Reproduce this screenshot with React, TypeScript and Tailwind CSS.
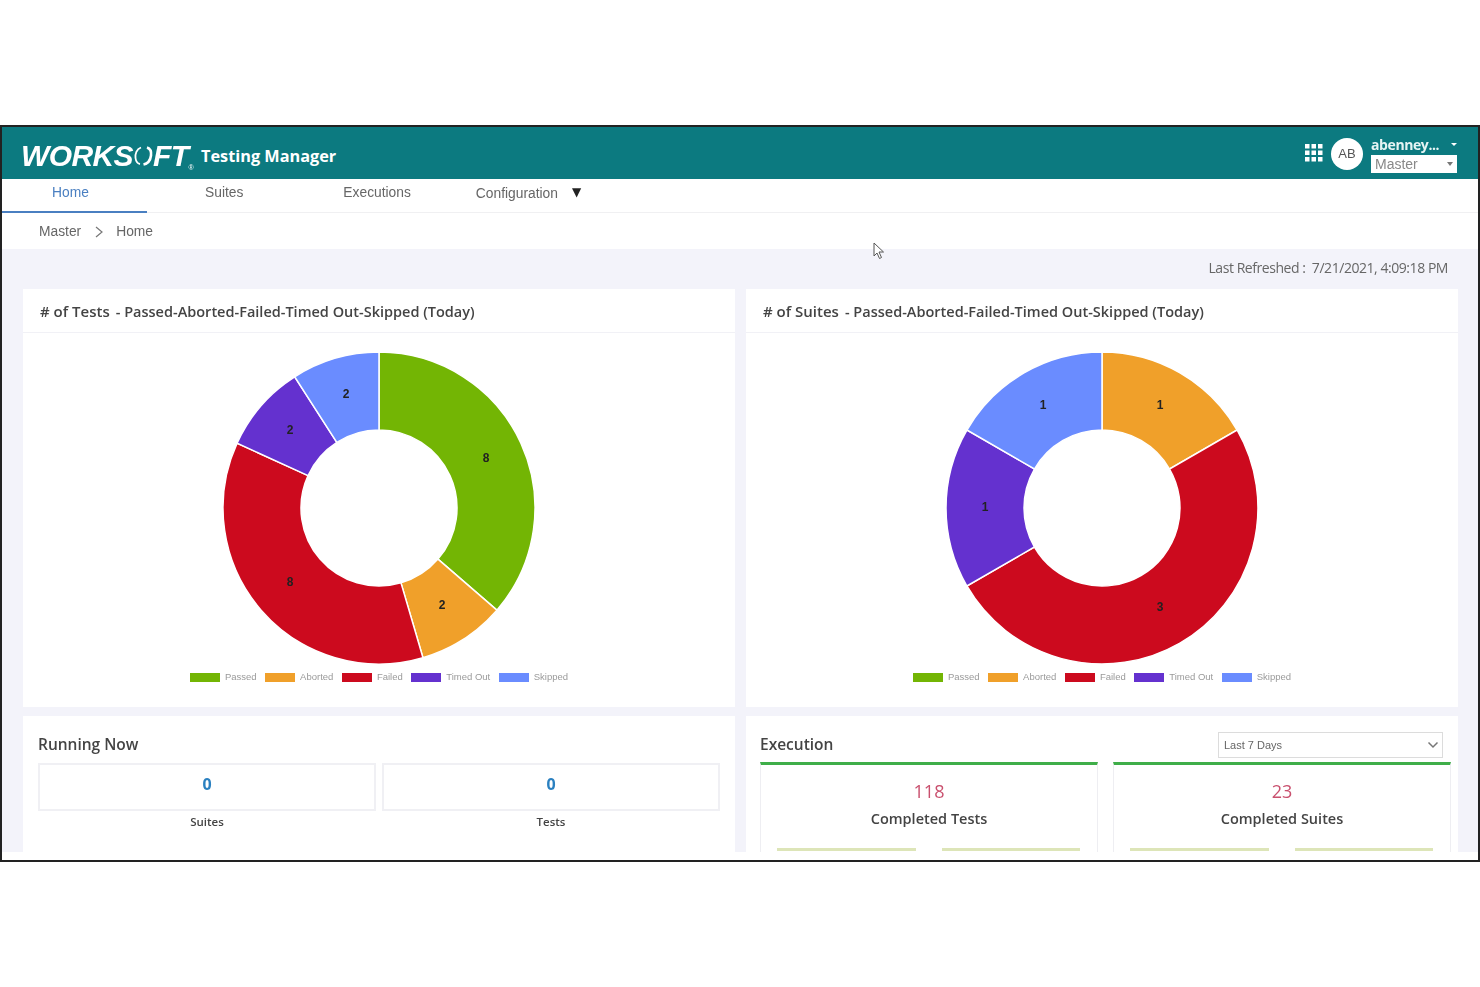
import React from "react";

const C = { p: "#73b504", a: "#f0a02a", f: "#cc0a1e", t: "#6431cf", s: "#6a8cff" };

function pt(cx: number, cy: number, r: number, deg: number) {
  const a = (deg * Math.PI) / 180;
  return [cx + r * Math.sin(a), cy - r * Math.cos(a)];
}

function slicePath(start: number, end: number) {
  const R = 156, r = 78, c = 160;
  const [x1, y1] = pt(c, c, R, start);
  const [x2, y2] = pt(c, c, R, end);
  const [x3, y3] = pt(c, c, r, end);
  const [x4, y4] = pt(c, c, r, start);
  const large = end - start > 180 ? 1 : 0;
  return `M${x1} ${y1}A${R} ${R} 0 ${large} 1 ${x2} ${y2}L${x3} ${y3}A${r} ${r} 0 ${large} 0 ${x4} ${y4}Z`;
}

type Seg = { v: number; c: string; lx: number; ly: number };

function Donut({ segs }: { segs: Seg[] }) {
  const total = segs.reduce((s, x) => s + x.v, 0);
  let cur = 0;
  return (
    <svg width="320" height="320" viewBox="0 0 320 320" className="block">
      {segs.map((s, i) => {
        const st = cur;
        cur += (s.v / total) * 360;
        return <path key={i} d={slicePath(st, cur)} fill={s.c} stroke="#ffffff" strokeWidth="1.5" />;
      })}
      {segs.map((s, i) => (
        <text key={i} x={s.lx} y={s.ly} textAnchor="middle" dominantBaseline="middle" fontSize="12" fontWeight="700" fontFamily="Liberation Sans, sans-serif" fill="#222">
          {s.v}
        </text>
      ))}
    </svg>
  );
}

function Legend() {
  const items = [
    ["Passed", C.p],
    ["Aborted", C.a],
    ["Failed", C.f],
    ["Timed Out", C.t],
    ["Skipped", C.s],
  ];
  return (
    <div className="flex justify-center gap-[8.5px] h-[16px] items-center">
      {items.map(([n, c]) => (
        <div key={n} className="flex items-center gap-[5px]">
          <span className="block w-[30px] h-[9px]" style={{ background: c }} />
          <span className="text-[9.5px] leading-none text-[#9a9a9a] font-['Liberation_Sans']">{n}</span>
        </div>
      ))}
    </div>
  );
}

function ChartCard({ name, segs }: { name: string; segs: Seg[] }) {
  return (
    <div className="bg-white h-[418px] flex flex-col">
      <div className="h-[44px] shrink-0 border-b border-[#f1f1f6] pl-[17px] pt-[2px] flex items-center text-[#444] font-['Open_Sans'] font-semibold whitespace-nowrap">
        <span className="text-[15px]">{name}</span>
        <span className="text-[14.5px] ml-[6px]">- Passed-Aborted-Failed-Timed Out-Skipped (Today)</span>
      </div>
      <div className="flex justify-center pt-[15px] h-[336px]">
        <Donut segs={segs} />
      </div>
      <Legend />
    </div>
  );
}

function RunTile({ n, label }: { n: string; label: string }) {
  return (
    <div className="flex flex-col items-center">
      <div className="w-full h-[48px] border-2 border-[#f0f0f4] flex items-center justify-center pb-[6px] text-[#2a80c0] text-[16px] font-bold font-['Open_Sans']">
        {n}
      </div>
      <div className="mt-[2px] text-[11.5px] font-semibold text-[#444] font-['Open_Sans']">{label}</div>
    </div>
  );
}

function ExecTile({ n, label }: { n: string; label: string }) {
  return (
    <div className="border-t-[3px] border-t-[#3fae49] border-x border-x-[#eeeef2] h-[100px] flex flex-col items-center relative">
      <div className="mt-[14px] text-[18px] leading-[24px] text-[#c9506e] font-['Open_Sans']">{n}</div>
      <div className="mt-[5px] text-[14.5px] leading-[22px] font-semibold text-[#444] font-['Open_Sans']">{label}</div>
      <div className="absolute left-[16px] right-[17px] bottom-[11px] h-[3px] flex gap-[26px]">
        <div className="flex-1 bg-[#dde5b8]" />
        <div className="flex-1 bg-[#dde5b8]" />
      </div>
    </div>
  );
}

function Logo() {
  return (
    <div className="flex items-center text-white font-['Liberation_Sans'] font-bold italic text-[30px] leading-none tracking-[-0.6px] w-[180px] relative">
      <span>WORKS</span>
      <svg width="22" height="24" viewBox="0 0 22 24" className="-mx-[1px]">
        <path d="M9 3.5C4.5 5 3 10 3.5 14c.4 3 2 5.5 4.5 6" fill="none" stroke="#fff" strokeWidth="1.8" />
        <path d="M15 3.5c3 1 4.5 4 4 8-.5 4-3 8-7.5 9" fill="none" stroke="#fff" strokeWidth="2.6" />
      </svg>
      <span>FT</span>
      <span className="text-[7px] not-italic font-normal self-end">®</span>
    </div>
  );
}

function Nav() {
  const cls = "text-[13.8px] text-[#666] font-['Liberation_Sans']";
  return (
    <div className="h-[34px] shrink-0 border-b border-[#f0f0f2] flex items-stretch relative">
      <div className="w-[145px] h-[34px] border-b-2 border-[#4a7fc1] flex justify-center pt-[4px] text-[13.8px] text-[#4a7fc1] font-['Liberation_Sans'] pr-[8px]">
        Home
      </div>
      <div className={`${cls} ml-[58px] pt-[4px]`}>Suites</div>
      <div className={`${cls} ml-[100px] pt-[4px]`}>Executions</div>
      <div className={`${cls} ml-[65px] pt-[5px]`}>Configuration</div>
      <div className="ml-[14px] pt-[4px] text-[#222] text-[12px] font-['DejaVu_Sans']">▼</div>
    </div>
  );
}

export default function App() {
  const left: Seg[] = [
    { v: 8, c: C.p, lx: 267, ly: 111 },
    { v: 2, c: C.a, lx: 223, ly: 258 },
    { v: 8, c: C.f, lx: 71, ly: 235 },
    { v: 2, c: C.t, lx: 71, ly: 83 },
    { v: 2, c: C.s, lx: 127, ly: 47 },
  ];
  const right: Seg[] = [
    { v: 1, c: C.a, lx: 218, ly: 58 },
    { v: 3, c: C.f, lx: 218, ly: 260 },
    { v: 1, c: C.t, lx: 43, ly: 160 },
    { v: 1, c: C.s, lx: 101, ly: 58 },
  ];
  return (
    <div className="w-[1480px] h-[987px] bg-white pt-[125px] relative overflow-hidden">
      <div className="h-[737px] border-2 border-[#222] flex flex-col blur-[0.7px]">
        <header className="h-[52px] shrink-0 bg-[#0c7a80] flex items-center pl-[19px] pr-[21px]">
          <div className="flex items-center pt-[6px]">
            <Logo />
            <div className="text-white font-bold text-[16.3px] font-['Open_Sans']">Testing Manager</div>
          </div>
          <div className="ml-auto flex items-center">
            <svg width="18" height="18" viewBox="0 0 18 18" fill="#fff" className="mr-[8px]">
              {[0, 6.5, 13].flatMap((y) =>
                [0, 6.5, 13].map((x) => <rect key={`${x}-${y}`} x={x} y={y} width="4.5" height="4.5" />)
              )}
            </svg>
            <div className="w-[32px] h-[32px] rounded-full bg-white flex items-center justify-center text-[13px] text-[#555] font-['Liberation_Sans'] mt-[2px]">
              AB
            </div>
            <div className="ml-[8px] w-[86px] flex flex-col">
              <div className="flex items-center justify-between h-[18px] text-[#e6f4f4] text-[14px] font-bold font-['Open_Sans'] tracking-[-0.4px]">
                <span>abenney...</span>
                <span className="w-0 h-0 border-x-[3px] border-x-transparent border-t-[3px] border-t-white" />
              </div>
              <div className="h-[18px] mt-[2px] -mb-[2px] bg-white flex items-center justify-between px-[4px] text-[14px] text-[#888] font-['Liberation_Sans']">
                <span>Master</span>
                <span className="w-0 h-0 border-x-[3px] border-x-transparent border-t-[4px] border-t-[#777]" />
              </div>
            </div>
          </div>
        </header>
        <Nav />
        <div className="h-[36px] shrink-0 flex items-center pl-[37px] pt-[2px] text-[13.8px] text-[#666] font-['Liberation_Sans']">
          <span>Master</span>
          <svg width="8" height="12" viewBox="0 0 8 12" className="ml-[14px] mr-[13px]">
            <path d="M1 1l6 5-6 5" fill="none" stroke="#777" strokeWidth="1.2" />
          </svg>
          <span>Home</span>
        </div>
        <main className="flex-1 min-h-0 bg-[#f3f3fa] overflow-hidden pl-[21px] pr-[20px]">
          <div className="h-[40px] flex items-center justify-end pr-[10px] pb-[4px] text-[14px] text-[#666] font-['Open_Sans'] tracking-[-0.45px]">
            Last Refreshed :&nbsp; 7/21/2021, 4:09:18 PM
          </div>
          <div className="grid grid-cols-2 gap-x-[11px] gap-y-[9px]">
            <ChartCard name="# of Tests" segs={left} />
            <ChartCard name="# of Suites" segs={right} />
            <div className="bg-white h-[140px] px-[15px]">
              <div className="h-[47px] pt-[15px] text-[15.5px] leading-[26px] font-semibold text-[#444] font-['Open_Sans']">Running Now</div>
              <div className="grid grid-cols-2 gap-[6px]">
                <RunTile n="0" label="Suites" />
                <RunTile n="0" label="Tests" />
              </div>
            </div>
            <div className="bg-white h-[140px] pl-[14px] pr-[7px]">
              <div className="h-[46px] flex items-center pt-[12px] text-[15.5px] font-semibold text-[#444] font-['Open_Sans']">
                <span>Execution</span>
                <div className="ml-auto mr-[8px] w-[225px] h-[26px] border border-[#dcdcdc] flex items-center justify-between pl-[5px] pr-[3px] text-[11px] font-normal text-[#666] font-['Liberation_Sans']">
                  <span>Last 7 Days</span>
                  <svg width="12" height="8" viewBox="0 0 12 8">
                    <path d="M1.5 1.5L6 6l4.5-4.5" fill="none" stroke="#777" strokeWidth="1.5" />
                  </svg>
                </div>
              </div>
              <div className="grid grid-cols-2 gap-[15px]">
                <ExecTile n="118" label="Completed Tests" />
                <ExecTile n="23" label="Completed Suites" />
              </div>
            </div>
          </div>
        </main>
        <div className="h-[8px] shrink-0 bg-white" />
      </div>
      <svg width="12" height="18" viewBox="0 0 12 18" className="absolute left-[873px] top-[242px]">
        <path d="M1 1v13l3-3 2.5 5.5 2-1L6 10h4.5z" fill="#fff" stroke="#555" strokeWidth="1" />
      </svg>
    </div>
  );
}
